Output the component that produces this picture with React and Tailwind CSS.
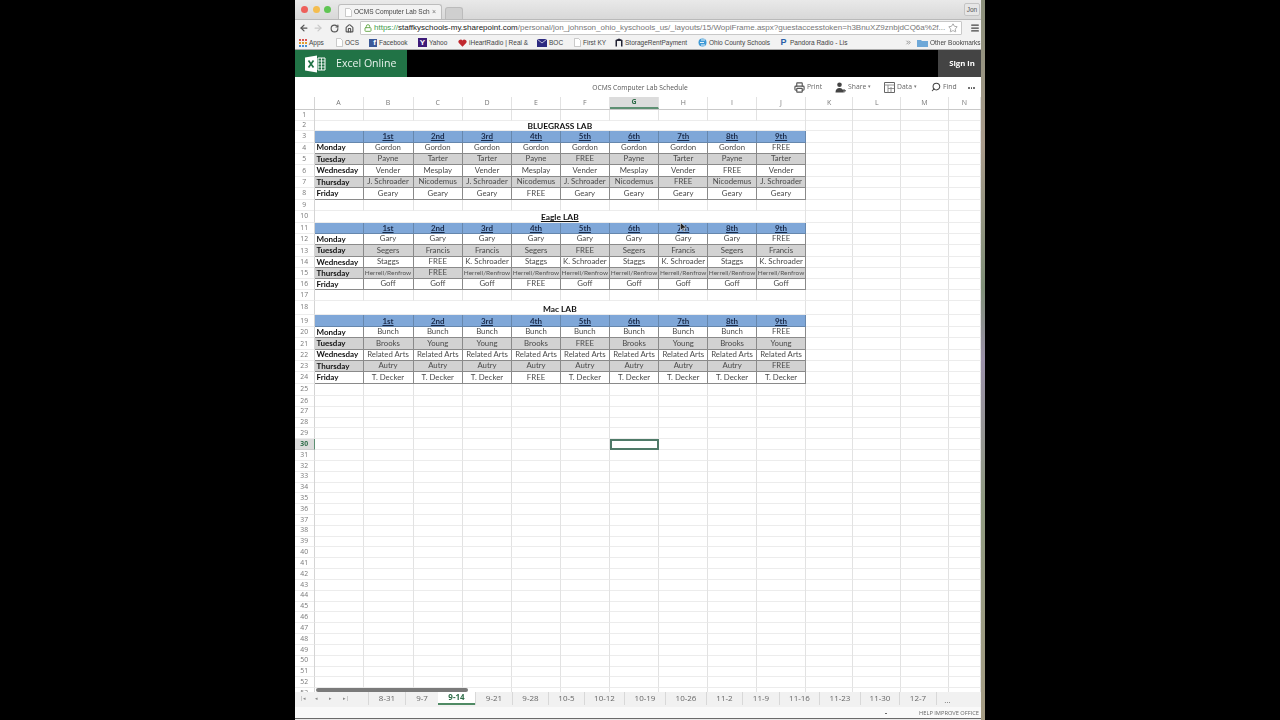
import { ArrowLeft, ArrowRight, RotateCw, Home, Lock, Star, Menu, Search, Printer, ChevronsRight } from 'lucide-react';

const COLS = 'grid grid-cols-[19.5px_49px_50px_49.5px_49px_49px_48.7px_49.7px_48.7px_49px_49px_47.3px_48px_47.3px_1fr]';
const LETTERS = ['A', 'B', 'C', 'D', 'E', 'F', 'G', 'H', 'I', 'J', 'K', 'L', 'M', 'N'];

const ROW_HEIGHTS = {
  1: 'h-[9.8px]', 2: 'h-[11.5px]', 3: 'h-[11.7px]', 4: 'h-[11.4px]', 5: 'h-[11.4px]', 6: 'h-[11.4px]', 7: 'h-[11.4px]', 8: 'h-[11.4px]',
  9: 'h-[10.3px]', 10: 'h-[13.2px]', 11: 'h-[10.8px]', 12: 'h-[11.5px]', 13: 'h-[11.5px]', 14: 'h-[11px]', 15: 'h-[11.4px]', 16: 'h-[11px]',
  17: 'h-[10.7px]', 18: 'h-[14.1px]', 19: 'h-[12.2px]', 20: 'h-[11.2px]', 21: 'h-[11.3px]', 22: 'h-[11px]', 23: 'h-[11.6px]', 24: 'h-[11.4px]', 25: 'h-[11.8px]',
};

const HR = 'Herrell/Renfrow';
const JS = 'J. Schroader';
const KS = 'K. Schroader';
const PERIODS = ['1st', '2nd', '3rd', '4th', '5th', '6th', '7th', '8th', '9th'];

const LABS = {
  3: { head: true, cells: PERIODS },
  4: { day: 'Monday', cells: ['Gordon', 'Gordon', 'Gordon', 'Gordon', 'Gordon', 'Gordon', 'Gordon', 'Gordon', 'FREE'] },
  5: { day: 'Tuesday', shade: true, cells: ['Payne', 'Tarter', 'Tarter', 'Payne', 'FREE', 'Payne', 'Tarter', 'Payne', 'Tarter'] },
  6: { day: 'Wednesday', cells: ['Vender', 'Mesplay', 'Vender', 'Mesplay', 'Vender', 'Mesplay', 'Vender', 'FREE', 'Vender'] },
  7: { day: 'Thursday', shade: true, cells: [JS, 'Nicodemus', JS, 'Nicodemus', JS, 'Nicodemus', 'FREE', 'Nicodemus', JS] },
  8: { day: 'Friday', cells: ['Geary', 'Geary', 'Geary', 'FREE', 'Geary', 'Geary', 'Geary', 'Geary', 'Geary'] },
  11: { head: true, cells: PERIODS },
  12: { day: 'Monday', cells: ['Gary', 'Gary', 'Gary', 'Gary', 'Gary', 'Gary', 'Gary', 'Gary', 'FREE'] },
  13: { day: 'Tuesday', shade: true, cells: ['Segers', 'Francis', 'Francis', 'Segers', 'FREE', 'Segers', 'Francis', 'Segers', 'Francis'] },
  14: { day: 'Wednesday', cells: ['Staggs', 'FREE', KS, 'Staggs', KS, 'Staggs', KS, 'Staggs', KS] },
  15: { day: 'Thursday', shade: true, cells: [HR, 'FREE', HR, HR, HR, HR, HR, HR, HR] },
  16: { day: 'Friday', cells: ['Goff', 'Goff', 'Goff', 'FREE', 'Goff', 'Goff', 'Goff', 'Goff', 'Goff'] },
  19: { head: true, cells: PERIODS },
  20: { day: 'Monday', cells: ['Bunch', 'Bunch', 'Bunch', 'Bunch', 'Bunch', 'Bunch', 'Bunch', 'Bunch', 'FREE'] },
  21: { day: 'Tuesday', shade: true, cells: ['Brooks', 'Young', 'Young', 'Brooks', 'FREE', 'Brooks', 'Young', 'Brooks', 'Young'] },
  22: { day: 'Wednesday', cells: Array(9).fill('Related Arts') },
  23: { day: 'Thursday', shade: true, cells: ['Autry', 'Autry', 'Autry', 'Autry', 'Autry', 'Autry', 'Autry', 'Autry', 'FREE'] },
  24: { day: 'Friday', cells: ['T. Decker', 'T. Decker', 'T. Decker', 'FREE', 'T. Decker', 'T. Decker', 'T. Decker', 'T. Decker', 'T. Decker'] },
};

const TITLES = { 2: 'BLUEGRASS LAB', 10: 'Eagle LAB', 18: 'Mac LAB' };

const TABS = [
  { label: '8-31', w: 'w-[37px]' }, { label: '9-7', w: 'w-[33px]' }, { label: '9-14', w: 'w-[37px]', active: true },
  { label: '9-21', w: 'w-[37px]' }, { label: '9-28', w: 'w-[36px]' }, { label: '10-5', w: 'w-[36px]' },
  { label: '10-12', w: 'w-[40px]' }, { label: '10-19', w: 'w-[41px]' }, { label: '10-26', w: 'w-[41px]' },
  { label: '11-2', w: 'w-[36px]' }, { label: '11-9', w: 'w-[37px]' }, { label: '11-16', w: 'w-[40px]' },
  { label: '11-23', w: 'w-[41px]' }, { label: '11-30', w: 'w-[39px]' }, { label: '12-7', w: 'w-[37px]' },
];

const BOOKMARKS = [
  { label: 'Apps', w: 'w-[37px]', icon: 'apps' },
  { label: 'OCS', w: 'w-[33px]', icon: 'page' },
  { label: 'Facebook', w: 'w-[49px]', icon: 'fb' },
  { label: 'Yahoo', w: 'w-[40px]', icon: 'yahoo' },
  { label: 'iHeartRadio | Real &', w: 'w-[79px]', icon: 'heart' },
  { label: 'BOC', w: 'w-[37px]', icon: 'mail' },
  { label: 'First KY', w: 'w-[41px]', icon: 'page' },
  { label: 'StorageRentPayment', w: 'w-[83px]', icon: 'storage' },
  { label: 'Ohio County Schools', w: 'w-[81px]', icon: 'ohio' },
  { label: 'Pandora Radio - Lis', w: 'w-[73px]', icon: 'pandora' },
];

function BookmarkIcon({ type }) {
  if (type === 'apps') {
    return (
      <svg width="8" height="8" viewBox="0 0 8 8" className="shrink-0">
        {[0, 3, 6].map((y) => [0, 3, 6].map((x) => (
          <rect key={`${x}-${y}`} x={x} y={y} width="2" height="2" fill={y === 0 ? '#d9534f' : y === 3 ? '#e0a030' : '#4a8fd0'} />
        )))}
      </svg>
    );
  }
  if (type === 'fb') return <span className="flex h-[8px] w-[8px] shrink-0 items-end justify-end bg-[#3b5998] pr-[1px] text-[8px] font-bold leading-[8px] text-white">f</span>;
  if (type === 'yahoo') return <span className="flex h-[9px] w-[9px] shrink-0 items-center justify-center bg-[#3d1a78] text-[8px] font-bold leading-none text-white">Y</span>;
  if (type === 'heart') {
    return (
      <svg width="9" height="8" viewBox="0 0 24 22" className="shrink-0">
        <path d="M12 21 2 11a6 6 0 0 1 10-7 6 6 0 0 1 10 7z" fill="#c0272d" />
      </svg>
    );
  }
  if (type === 'mail') {
    return (
      <svg width="10" height="8" viewBox="0 0 10 8" className="shrink-0">
        <rect width="10" height="8" fill="#2d2a80" />
        <path d="M0 0l5 4 5-4" stroke="#fff" strokeWidth=".7" fill="none" />
      </svg>
    );
  }
  if (type === 'storage') {
    return (
      <svg width="8" height="9" viewBox="0 0 8 9" className="shrink-0">
        <path d="M.5 8.5V2L4 .5 7.5 2v6.5H6V3H2v5.5z" fill="#223" />
      </svg>
    );
  }
  if (type === 'ohio') {
    return (
      <svg width="9" height="9" viewBox="0 0 9 9" className="shrink-0">
        <circle cx="4.5" cy="4.5" r="4" fill="#3f9ad6" />
        <path d="M3 2h4M2 4.5h4M3 7h4" stroke="#fff" strokeWidth=".9" />
      </svg>
    );
  }
  if (type === 'pandora') return <span className="flex h-[9px] w-[9px] shrink-0 items-center justify-center text-[9px] font-bold leading-none text-[#2a5fa8]">P</span>;
  return (
    <svg width="7" height="9" viewBox="0 0 7 9" className="shrink-0">
      <path d="M.5.5h4l2 2v6h-6z" fill="#fff" stroke="#aaa" strokeWidth=".6" />
    </svg>
  );
}

function ChromeBar() {
  return (
    <div className="shrink-0 font-['Liberation_Sans',sans-serif]">
      <div className="relative flex h-[19px] items-end bg-gradient-to-b from-[#e9e9e9] to-[#d8d8d8]">
        <div className="ml-[6px] flex gap-[4.5px] self-center">
          <span className="h-[7px] w-[7px] rounded-full bg-[#ee5f5a]" />
          <span className="h-[7px] w-[7px] rounded-full bg-[#f4bd4f]" />
          <span className="h-[7px] w-[7px] rounded-full bg-[#5fc553]" />
        </div>
        <div className="ml-[7px] flex h-[15px] w-[104px] items-center gap-[2px] rounded-t-[3px] border border-b-0 border-[#bdbdbd] bg-[#f2f2f2] pl-[6px] pr-[5px] text-[6.5px] text-[#444]">
          <BookmarkIcon type="page" />
          <span className="whitespace-nowrap">OCMS Computer Lab Sch</span>
          <span className="ml-auto text-[7px] text-[#777]">×</span>
        </div>
        <div className="ml-[3px] h-[12px] w-[18px] rounded-t-[3px] border border-b-0 border-[#bbb] bg-[#cfcfcf]" />
        <div className="absolute right-[1px] top-[3px] flex h-[13px] w-[16px] items-center justify-center rounded-[2px] border border-[#c4c4c4] bg-[#e6e6e6] text-[6.5px] text-[#555]">Jon</div>
      </div>
      <div className="flex h-[17px] items-center border-t border-[#b9b9b9] bg-[#f2f2f2]">
        <ArrowLeft size={10} strokeWidth={3} className="ml-[4px] text-[#555]" />
        <ArrowRight size={10} strokeWidth={3} className="ml-[4px] text-[#c9c9c9]" />
        <RotateCw size={9} strokeWidth={3} className="ml-[7px] text-[#555]" />
        <Home size={9} strokeWidth={3} className="ml-[6px] text-[#555]" />
        <div className="ml-[6px] flex h-[14px] w-[602px] items-center gap-[2px] overflow-hidden rounded-[1px] border border-[#c8c8c8] bg-white pl-[3px] pr-[3px] text-[8px]">
          <Lock size={8} strokeWidth={3} className="shrink-0 text-[#6fae55]" />
          <span className="whitespace-nowrap text-[#777]">
            <span className="text-[#3d9b4c]">https://</span>
            <span className="text-[#222]">staffkyschools-my.sharepoint.com</span>
            /personal/jon_johnson_ohio_kyschools_us/_layouts/15/WopiFrame.aspx?guestaccesstoken=h3BnuXZ9znbjdCQ6a%2f...
          </span>
          <Star size={10} className="ml-auto shrink-0 text-[#999]" />
        </div>
        <Menu size={10} strokeWidth={3} className="ml-auto mr-[1px] text-[#444]" />
      </div>
      <div className="flex h-[14px] items-center border-b border-[#aaa] bg-[#f2f2f2] pl-[4px] text-[6.5px] text-[#444]">
        {BOOKMARKS.map((b) => (
          <div key={b.label} className={`flex items-center gap-[2px] overflow-hidden whitespace-nowrap ${b.w}`}>
            <BookmarkIcon type={b.icon} />
            <span>{b.label}</span>
          </div>
        ))}
        <ChevronsRight size={7} className="ml-[53px] text-[#555]" />
        <svg width="11" height="8" viewBox="0 0 11 8" className="ml-[5px] shrink-0">
          <path d="M0 1h4l1 1h6v6H0z" fill="#6ea8d8" />
        </svg>
        <span className="ml-[2px] whitespace-nowrap">Other Bookmarks</span>
      </div>
    </div>
  );
}

function ExcelHeader() {
  return (
    <div className="flex h-[27px] shrink-0 items-stretch bg-black font-['Open_Sans',sans-serif]">
      <div className="flex w-[112px] items-center bg-[#217346] pl-[10px]">
        <svg width="21" height="18" viewBox="0 0 21 18">
          <path d="M0 2.5 12 .5v17L0 15.5z" fill="#fff" />
          <path d="M13 3h7v12h-7z" fill="none" stroke="#fff" />
          <path d="M13 6h7M13 9h7M13 12h7M16.5 3v12" stroke="#fff" strokeWidth=".8" />
          <path d="M3.5 5.5 8.5 12.5M8.5 5.5 3.5 12.5" stroke="#217346" strokeWidth="1.7" />
        </svg>
        <span className="ml-[10px] text-[10.6px] text-[#e8f2ec]">Excel Online</span>
      </div>
      <div className="ml-auto flex w-[43px] items-center justify-center bg-[#444] pl-[5px] text-[7.8px] font-bold text-white">Sign in</div>
    </div>
  );
}

function ToolItem({ icon, label, caret, w }) {
  return (
    <div className={`flex items-center gap-[2px] text-[6.8px] text-[#666] ${w}`}>
      {icon}
      <span>{label}</span>
      {caret && <span className="text-[5px] text-[#777]">▾</span>}
    </div>
  );
}

function Toolbar() {
  return (
    <div className="relative flex h-[20px] shrink-0 items-center bg-white font-['Open_Sans',sans-serif]">
      <div className="absolute left-0 top-[6px] w-[690px] text-center text-[6.7px] leading-[10px] text-[#555]">OCMS Computer Lab Schedule</div>
      <div className="relative ml-[499px] flex items-center">
        <ToolItem
          w="w-[41px]"
          label="Print"
          icon={<Printer size={11} strokeWidth={2.5} className="text-[#555]" />}
        />
        <ToolItem
          w="w-[49px]"
          label="Share"
          caret
          icon={
            <svg width="11" height="11" viewBox="0 0 11 11">
              <circle cx="4.5" cy="2.8" r="2.3" fill="#444" />
              <path d="M.5 10.5c0-3 1.5-4.5 4-4.5s4 1.5 4 4.5z" fill="#444" />
              <path d="M9 7v3.5M7.5 8.8H11" stroke="#444" strokeWidth="1" />
            </svg>
          }
        />
        <ToolItem
          w="w-[47px]"
          label="Data"
          caret
          icon={
            <svg width="11" height="11" viewBox="0 0 11 11">
              <path d="M.5.5h10v10H.5z" fill="#fff" stroke="#666" />
              <path d="M.5 3h10M4 3v7.5M7 5v5.5M4 6.5h6" stroke="#888" strokeWidth=".9" />
            </svg>
          }
        />
        <ToolItem w="w-[36px]" label="Find" icon={<Search size={10} strokeWidth={2.5} className="-scale-x-100 text-[#444]" />} />
        <div className="ml-[1px] mt-[2px] flex gap-[1px]">
          <span className="h-[1.5px] w-[1.5px] rounded-full bg-[#444]" />
          <span className="h-[1.5px] w-[1.5px] rounded-full bg-[#444]" />
          <span className="h-[1.5px] w-[1.5px] rounded-full bg-[#444]" />
        </div>
      </div>
    </div>
  );
}

function ColumnHeader() {
  return (
    <div className={`${COLS} h-[12.7px] shrink-0 border-b border-[#c9c9c9] bg-white font-['Open_Sans',sans-serif] text-[7px] leading-[10px]`}>
      <div className="border-r border-[#d4d4d4]" />
      {LETTERS.map((c) => (
        <div
          key={c}
          className={`flex items-center justify-center border-r border-[#e2e2e2] ${
            c === 'G' ? 'border-b-2 border-b-[#5d8f72] bg-[#dcdcdc] font-bold text-[#2f6d49]' : 'text-[#777]'
          }`}
        >
          {c}
        </div>
      ))}
    </div>
  );
}

function RowNumber({ n }) {
  const active = n === 30;
  return (
    <div
      className={`flex items-center justify-center border-b border-r font-['Open_Sans',sans-serif] text-[6.8px] ${
        active ? 'border-b-[#ccc] border-r-[#5d8f72] bg-[#dcdcdc] font-bold text-[#2f6d49]' : 'border-b-[#ececec] border-r-[#d4d4d4] text-[#777]'
      }`}
    >
      {n}
    </div>
  );
}

function SheetRow({ n }) {
  const height = ROW_HEIGHTS[n] || 'h-[10.83px]';
  const row = LABS[n];

  if (TITLES[n]) {
    return (
      <div className={`${COLS} ${height} shrink-0`}>
        <RowNumber n={n} />
        <div className={`col-span-10 flex items-end justify-center border-b border-r border-b-[#ececec] border-r-[#e2e2e2] text-[8.4px] font-bold text-[#111] ${n === 2 ? 'leading-[8px]' : 'leading-[10px]'} ${n === 10 ? 'underline' : ''}`}>
          {TITLES[n]}
        </div>
        {[0, 1, 2, 3].map((i) => <div key={i} className="border-b border-r border-b-[#ececec] border-r-[#e2e2e2]" />)}
      </div>
    );
  }

  if (row) {
    const bg = row.head ? 'bg-[#7fa7d8]' : row.shade ? 'bg-[#d2d2d2]' : 'bg-white';
    const border = row.head ? 'border-[#6687ad]' : 'border-[#8a8a8a]';
    return (
      <div className={`${COLS} ${height} shrink-0`}>
        <RowNumber n={n} />
        <div className={`flex items-center overflow-hidden whitespace-nowrap border-b border-r pb-[1px] pl-[2px] text-[8px] font-bold leading-none text-[#111] ${bg} ${border}`}>{row.day}</div>
        {row.cells.map((text, i) => (
          <div
            key={i}
            className={`flex items-center justify-center overflow-hidden whitespace-nowrap border-b border-r leading-none ${bg} ${border} ${
              row.head ? 'text-[8px] font-bold text-[#1b2b4a] underline' : text === HR ? 'text-[6.5px] text-[#555]' : 'text-[7.8px] text-[#4a4a4a]'
            }`}
          >
            {text}
          </div>
        ))}
        {[0, 1, 2, 3].map((i) => <div key={i} className="border-b border-r border-b-[#ececec] border-r-[#e2e2e2]" />)}
      </div>
    );
  }

  return (
    <div className={`${COLS} ${height} shrink-0`}>
      <RowNumber n={n} />
      {LETTERS.map((c) => (
        <div
          key={c}
          className={n === 30 && c === 'G' ? 'z-10 border-2 border-[#4f7a68]' : 'border-b border-r border-b-[#ececec] border-r-[#e2e2e2]'}
        />
      ))}
    </div>
  );
}

function Sheet() {
  const rows = Array.from({ length: 53 }, (_, i) => i + 1);
  return (
    <div className="relative min-h-0 flex-1 overflow-hidden bg-white font-['Lato',sans-serif]">
      {rows.map((n) => <SheetRow key={n} n={n} />)}
      <div className="absolute bottom-[0.5px] left-[21px] h-[3.5px] w-[152px] rounded-full bg-[#7a7a7a]" />
      <svg width="7" height="10" viewBox="0 0 7 10" className="absolute left-[385px] top-[112px]">
        <path d="M.5.5v8l2-2 1.5 3 1-.5-1.5-3h3z" fill="#222" stroke="#fff" strokeWidth=".5" />
      </svg>
    </div>
  );
}

function SheetTabs() {
  return (
    <div className="flex h-[15px] shrink-0 items-stretch bg-[#f1f1f1] pb-[2px] font-['Open_Sans',sans-serif] text-[8px] text-[#666]">
      <div className="flex w-[73px] items-center pl-[5px] text-[5px] text-[#888]">
        <span className="w-[15px]">|◂</span>
        <span className="w-[14px]">◂</span>
        <span className="w-[14px]">▸</span>
        <span>▸|</span>
      </div>
      {TABS.map((t) => (
        <div
          key={t.label}
          className={`flex items-center justify-center pb-[2px] ${t.w} ${
            t.active ? 'border-b-2 border-b-[#4f8a64] bg-white font-bold text-[#2f6d49]' : 'border-l border-[#d8d8d8]'
          }`}
        >
          {t.label}
        </div>
      ))}
      <div className="flex w-[22px] items-end justify-center border-l border-[#d8d8d8] pb-[1px] text-[8px] leading-none">...</div>
    </div>
  );
}

function StatusBar() {
  return (
    <>
      <div className="flex h-[11px] shrink-0 items-center bg-[#f9f9f9] pr-[2px] pt-[2px] font-['Open_Sans',sans-serif] text-[5.7px] text-[#666]">
        <span className="ml-[590px] h-[1.5px] w-[1.5px] rounded-full bg-[#555]" />
        <span className="ml-auto whitespace-nowrap">HELP IMPROVE OFFICE</span>
      </div>
      <div className="h-[1px] shrink-0 bg-[#6a6a6a]" />
      <div className="h-[1px] shrink-0 bg-[#e8e8e8]" />
    </>
  );
}

export default function App() {
  return (
    <div className="flex h-screen w-full justify-center overflow-hidden bg-black">
      <div className="flex w-[690px] blur-[0.35px]">
        <div className="flex w-[686px] flex-col">
          <ChromeBar />
          <ExcelHeader />
          <Toolbar />
          <ColumnHeader />
          <Sheet />
          <SheetTabs />
          <StatusBar />
        </div>
        <div className="w-[4px] bg-[linear-gradient(180deg,#8a8f7a_0%,#a89a8a_20%,#7f8f78_40%,#9a90a8_50%,#8f9a80_70%,#a59c84_100%)]" />
      </div>
    </div>
  );
}
